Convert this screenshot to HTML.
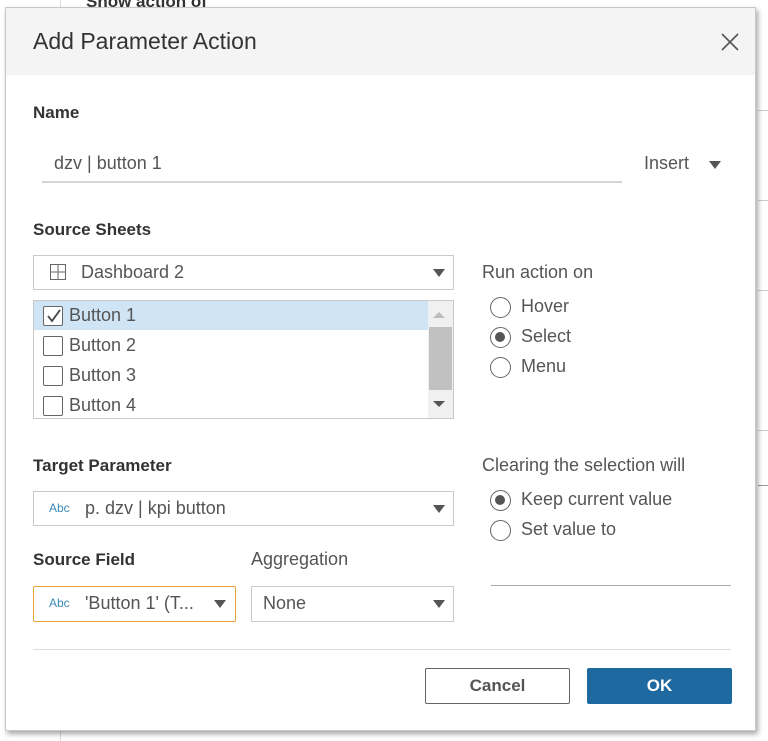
<!DOCTYPE html>
<html><head><style>
*{box-sizing:border-box;margin:0;padding:0}
body{width:768px;height:741px;overflow:hidden;background:#fff;font-family:"Liberation Sans",sans-serif;color:#333;position:relative}
.a{position:absolute;white-space:nowrap}
.dlg{position:absolute;left:5px;top:7px;width:751px;height:724px;background:#fff;border:1px solid #c8c8c8;box-shadow:2px 3px 5px rgba(0,0,0,.35)}
.hdr{position:absolute;left:0;top:0;width:100%;height:67px;background:#f4f4f4}
.lbl{font-size:17px;font-weight:bold;color:#333}
.t{font-size:18px;color:#555}
.box{position:absolute;border:1px solid #c9c9c9;background:#fff}
.tri{position:absolute;width:0;height:0;border-left:6px solid transparent;border-right:6px solid transparent;border-top:8px solid #555}
.cb{position:absolute;width:20px;height:20px;border:1.5px solid #666;border-radius:2px;background:#fff}
.rd{position:absolute;width:21px;height:21px;border:1.5px solid #666;border-radius:50%;background:#fff}
.rd.on::after{content:"";position:absolute;left:4px;top:4px;width:10px;height:10px;border-radius:50%;background:#555}
.abc{font-size:12px;color:#3a8ab8}
</style></head><body>
<div class="a" style="left:86px;top:-8px;font-size:17px;font-weight:bold;color:#333">Show action of</div>
<div class="a" style="left:60px;top:0;width:1px;height:741px;background:#ddd"></div>
<div class="a" style="left:758px;top:110px;width:10px;height:1px;background:#ccc"></div>
<div class="a" style="left:758px;top:200px;width:10px;height:1px;background:#ccc"></div>
<div class="a" style="left:758px;top:290px;width:10px;height:1px;background:#ccc"></div>
<div class="a" style="left:758px;top:430px;width:10px;height:1px;background:#ccc"></div>
<div class="a" style="left:758px;top:485px;width:10px;height:1px;background:#999"></div>
<div class="dlg">
 <div class="hdr"></div>
 <div class="a" style="left:27px;top:20px;font-size:23px;color:#333">Add Parameter Action</div>
 <svg class="a" style="left:715px;top:25px" width="18" height="18"><path d="M1 1L17 17M17 1L1 17" stroke="#555" stroke-width="1.6"/></svg>
 <div class="a lbl" style="left:27px;top:95px">Name</div>
 <div class="a t" style="left:48px;top:145px">dzv | button 1</div>
 <div class="a" style="left:36px;top:173px;width:580px;height:2px;background:#d6d6d6"></div>
 <div class="a t" style="left:638px;top:145px">Insert</div>
 <div class="tri" style="left:703px;top:153px"></div>
 <div class="a lbl" style="left:27px;top:212px">Source Sheets</div>
 <div class="box" style="left:27px;top:247px;width:421px;height:35px"></div>
 <svg class="a" style="left:44px;top:256px" width="16" height="16"><rect x="0.5" y="0.5" width="15" height="15" fill="none" stroke="#666"/><path d="M8 0V16M0 8H16" stroke="#666"/></svg>
 <div class="a t" style="left:75px;top:254px">Dashboard 2</div>
 <div class="tri" style="left:427px;top:261px"></div>
 <div class="box" style="left:27px;top:292px;width:421px;height:119px"></div>
 <div class="a" style="left:28px;top:293px;width:394px;height:29px;background:#cfe4f5"></div>
 <div class="a" style="left:422px;top:293px;width:25px;height:117px;background:#f0f0f0"></div>
 <div class="a" style="left:423px;top:319px;width:23px;height:63px;background:#c1c1c1"></div>
 <div class="a" style="left:427px;top:304px;width:0;height:0;border-left:6px solid transparent;border-right:6px solid transparent;border-bottom:6px solid #bbb"></div>
 <div class="tri" style="left:427px;top:393px;border-top-width:6px"></div>
 <div class="cb" style="left:37px;top:298px"></div>
 <svg class="a" style="left:40px;top:300px" width="16" height="16"><path d="M2 8L6 13L14 2" fill="none" stroke="#444" stroke-width="1.8"/></svg>
 <div class="a t" style="left:63px;top:297px">Button 1</div>
 <div class="cb" style="left:37px;top:328px"></div><div class="a t" style="left:63px;top:327px">Button 2</div>
 <div class="cb" style="left:37px;top:358px"></div><div class="a t" style="left:63px;top:357px">Button 3</div>
 <div class="cb" style="left:37px;top:388px"></div><div class="a t" style="left:63px;top:387px">Button 4</div>
 <div class="a t" style="left:476px;top:254px">Run action on</div>
 <div class="rd" style="left:484px;top:289px"></div><div class="a t" style="left:515px;top:288px">Hover</div>
 <div class="rd on" style="left:484px;top:319px"></div><div class="a t" style="left:515px;top:318px">Select</div>
 <div class="rd" style="left:484px;top:349px"></div><div class="a t" style="left:515px;top:348px">Menu</div>
 <div class="a lbl" style="left:27px;top:448px">Target Parameter</div>
 <div class="box" style="left:27px;top:483px;width:421px;height:35px"></div>
 <div class="a abc" style="left:43px;top:493px">Abc</div>
 <div class="a t" style="left:79px;top:490px">p. dzv | kpi button</div>
 <div class="tri" style="left:427px;top:497px"></div>
 <div class="a t" style="left:476px;top:447px">Clearing the selection will</div>
 <div class="rd on" style="left:484px;top:482px"></div><div class="a t" style="left:515px;top:481px">Keep current value</div>
 <div class="rd" style="left:484px;top:512px"></div><div class="a t" style="left:515px;top:511px">Set value to</div>
 <div class="a" style="left:485px;top:577px;width:240px;height:1px;background:#aaa"></div>
 <div class="a lbl" style="left:27px;top:542px">Source Field</div>
 <div class="a t" style="left:245px;top:541px">Aggregation</div>
 <div class="box" style="left:27px;top:578px;width:203px;height:36px;border-color:#e8a33a;border-width:1.5px;border-radius:2px"></div>
 <div class="a abc" style="left:43px;top:588px">Abc</div>
 <div class="a t" style="left:79px;top:585px">'Button 1' (T...</div>
 <div class="tri" style="left:208px;top:592px"></div>
 <div class="box" style="left:245px;top:578px;width:203px;height:36px"></div>
 <div class="a t" style="left:257px;top:585px">None</div>
 <div class="tri" style="left:427px;top:592px"></div>
 <div class="a" style="left:27px;top:641px;width:698px;height:1px;background:#ddd"></div>
 <div class="a" style="left:419px;top:660px;width:145px;height:36px;border:1px solid #666;border-radius:2px;font-size:17px;font-weight:bold;color:#555;text-align:center;line-height:34px">Cancel</div>
 <div class="a" style="left:581px;top:660px;width:145px;height:36px;background:#1d69a0;border-radius:2px;font-size:17px;font-weight:bold;color:#fff;text-align:center;line-height:36px">OK</div>
</div>
</body></html>
